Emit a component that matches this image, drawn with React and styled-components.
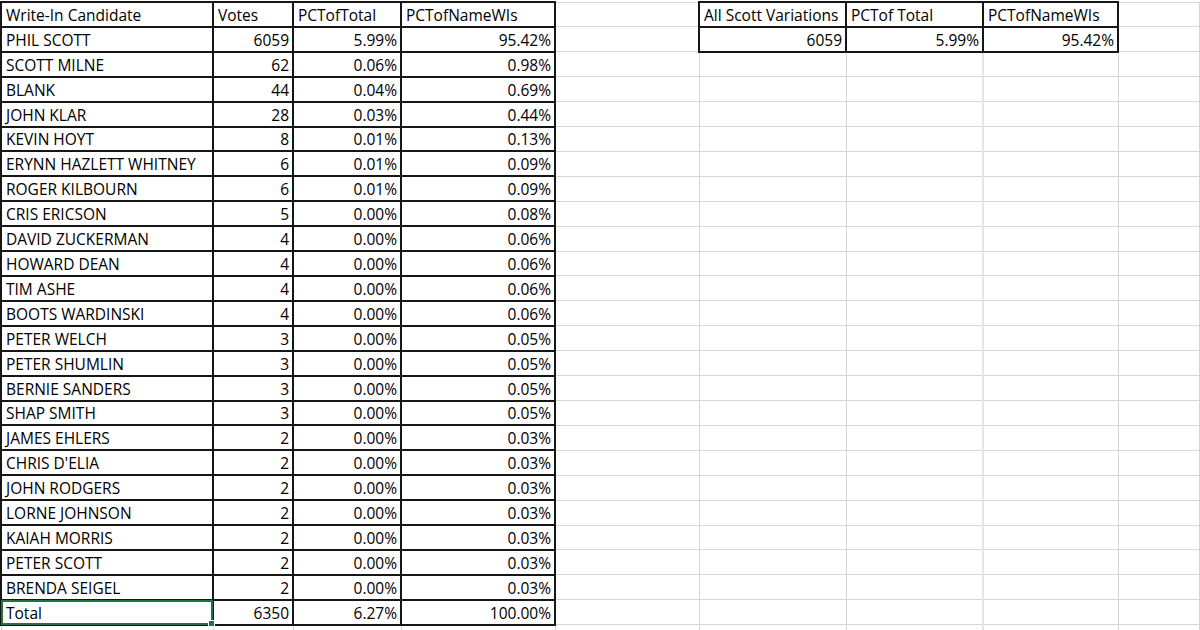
import React from "react";
import styled, { createGlobalStyle, css } from "styled-components";

const GlobalStyle = createGlobalStyle`
  html, body { margin: 0; padding: 0; background: #ffffff; }
  body {
    font-family: "Open Sans", Lato, "Liberation Sans", sans-serif;
    overflow: hidden;
    width: 1200px;
    height: 630px;
  }
`;

const Page = styled.div`
  width: 1200px;
  height: 630px;
  overflow: hidden;
  padding-top: 1px;
  box-sizing: border-box;
`;

const Sheet = styled.table`
  border-collapse: collapse;
  table-layout: fixed;
  width: 1262px;
`;

const Row = styled.tr`
  height: 24.92px;
`;

const Cell = styled.td`
  height: 24.92px;
  box-sizing: border-box;
  padding: 0 3px 3px 4px;
  vertical-align: bottom;
  font-size: 15.5px;
  line-height: 16px;
  color: #000000;
  white-space: nowrap;
  overflow: visible;
  text-align: ${(p) => (p.$num ? "right" : "left")};
  border: 1px solid #d6d6d6;
  ${(p) =>
    p.$soft &&
    css`
      border-right: 2px solid #e4e4e4;
    `}
  ${(p) =>
    p.$boxed &&
    css`
      border: 2px solid #161616;
    `}
  ${(p) =>
    p.$selected &&
    css`
      position: relative;
    `}
`;

const Selection = styled.span`
  position: absolute;
  left: -1px;
  top: -1px;
  right: -1px;
  bottom: -1px;
  border: 2px solid #217346;
  pointer-events: none;
`;

const FillHandle = styled.span`
  position: absolute;
  right: -4px;
  bottom: -4px;
  width: 5px;
  height: 5px;
  background: #217346;
  border: 1px solid #ffffff;
`;

const COLS = [212, 80, 108, 154, 144, 147, 137, 135, 81, 64];

const left = [
  ["Write-In Candidate", "Votes", "PCTofTotal", "PCTofNameWIs", true],
  ["PHIL SCOTT", "6059", "5.99%", "95.42%"],
  ["SCOTT MILNE", "62", "0.06%", "0.98%"],
  ["BLANK", "44", "0.04%", "0.69%"],
  ["JOHN KLAR", "28", "0.03%", "0.44%"],
  ["KEVIN HOYT", "8", "0.01%", "0.13%"],
  ["ERYNN HAZLETT WHITNEY", "6", "0.01%", "0.09%"],
  ["ROGER KILBOURN", "6", "0.01%", "0.09%"],
  ["CRIS ERICSON", "5", "0.00%", "0.08%"],
  ["DAVID ZUCKERMAN", "4", "0.00%", "0.06%"],
  ["HOWARD DEAN", "4", "0.00%", "0.06%"],
  ["TIM ASHE", "4", "0.00%", "0.06%"],
  ["BOOTS WARDINSKI", "4", "0.00%", "0.06%"],
  ["PETER WELCH", "3", "0.00%", "0.05%"],
  ["PETER SHUMLIN", "3", "0.00%", "0.05%"],
  ["BERNIE SANDERS", "3", "0.00%", "0.05%"],
  ["SHAP SMITH", "3", "0.00%", "0.05%"],
  ["JAMES EHLERS", "2", "0.00%", "0.03%"],
  ["CHRIS D'ELIA", "2", "0.00%", "0.03%"],
  ["JOHN RODGERS", "2", "0.00%", "0.03%"],
  ["LORNE JOHNSON", "2", "0.00%", "0.03%"],
  ["KAIAH MORRIS", "2", "0.00%", "0.03%"],
  ["PETER SCOTT", "2", "0.00%", "0.03%"],
  ["BRENDA SEIGEL", "2", "0.00%", "0.03%"],
  ["Total", "6350", "6.27%", "100.00%"],
];

const right = [
  ["All Scott Variations", "PCTof Total", "PCTofNameWIs", true],
  ["6059", "5.99%", "95.42%"],
];

const TOTAL_ROWS = 26;

export default function App() {
  const rows = [];
  for (let r = 0; r < TOTAL_ROWS; r++) {
    const L = left[r];
    const R = right[r];
    const cells = [];
    for (let c = 0; c < 4; c++) {
      if (L) {
        const header = L[4] === true;
        const isNum = !header && c > 0;
        const selected = r === 24 && c === 0;
        cells.push(
          <Cell key={"l" + c} $boxed $num={isNum} $selected={selected}>
            {L[c]}
            {selected && (
              <Selection>
                <FillHandle />
              </Selection>
            )}
          </Cell>
        );
      } else {
        cells.push(<Cell key={"l" + c} />);
      }
    }
    cells.push(<Cell key="e" />);
    for (let c = 0; c < 3; c++) {
      if (R) {
        const header = R[3] === true;
        cells.push(
          <Cell key={"r" + c} $boxed $num={!header}>
            {R[c]}
          </Cell>
        );
      } else {
        cells.push(<Cell key={"r" + c} $soft={c === 1} />);
      }
    }
    cells.push(<Cell key="j" />);
    cells.push(<Cell key="k" />);
    rows.push(<Row key={r}>{cells}</Row>);
  }

  return (
    <Page>
      <GlobalStyle />
      <Sheet>
        <colgroup>
          {COLS.map((w, i) => (
            <col key={i} style={{ width: w }} />
          ))}
        </colgroup>
        <tbody>{rows}</tbody>
      </Sheet>
    </Page>
  );
}
